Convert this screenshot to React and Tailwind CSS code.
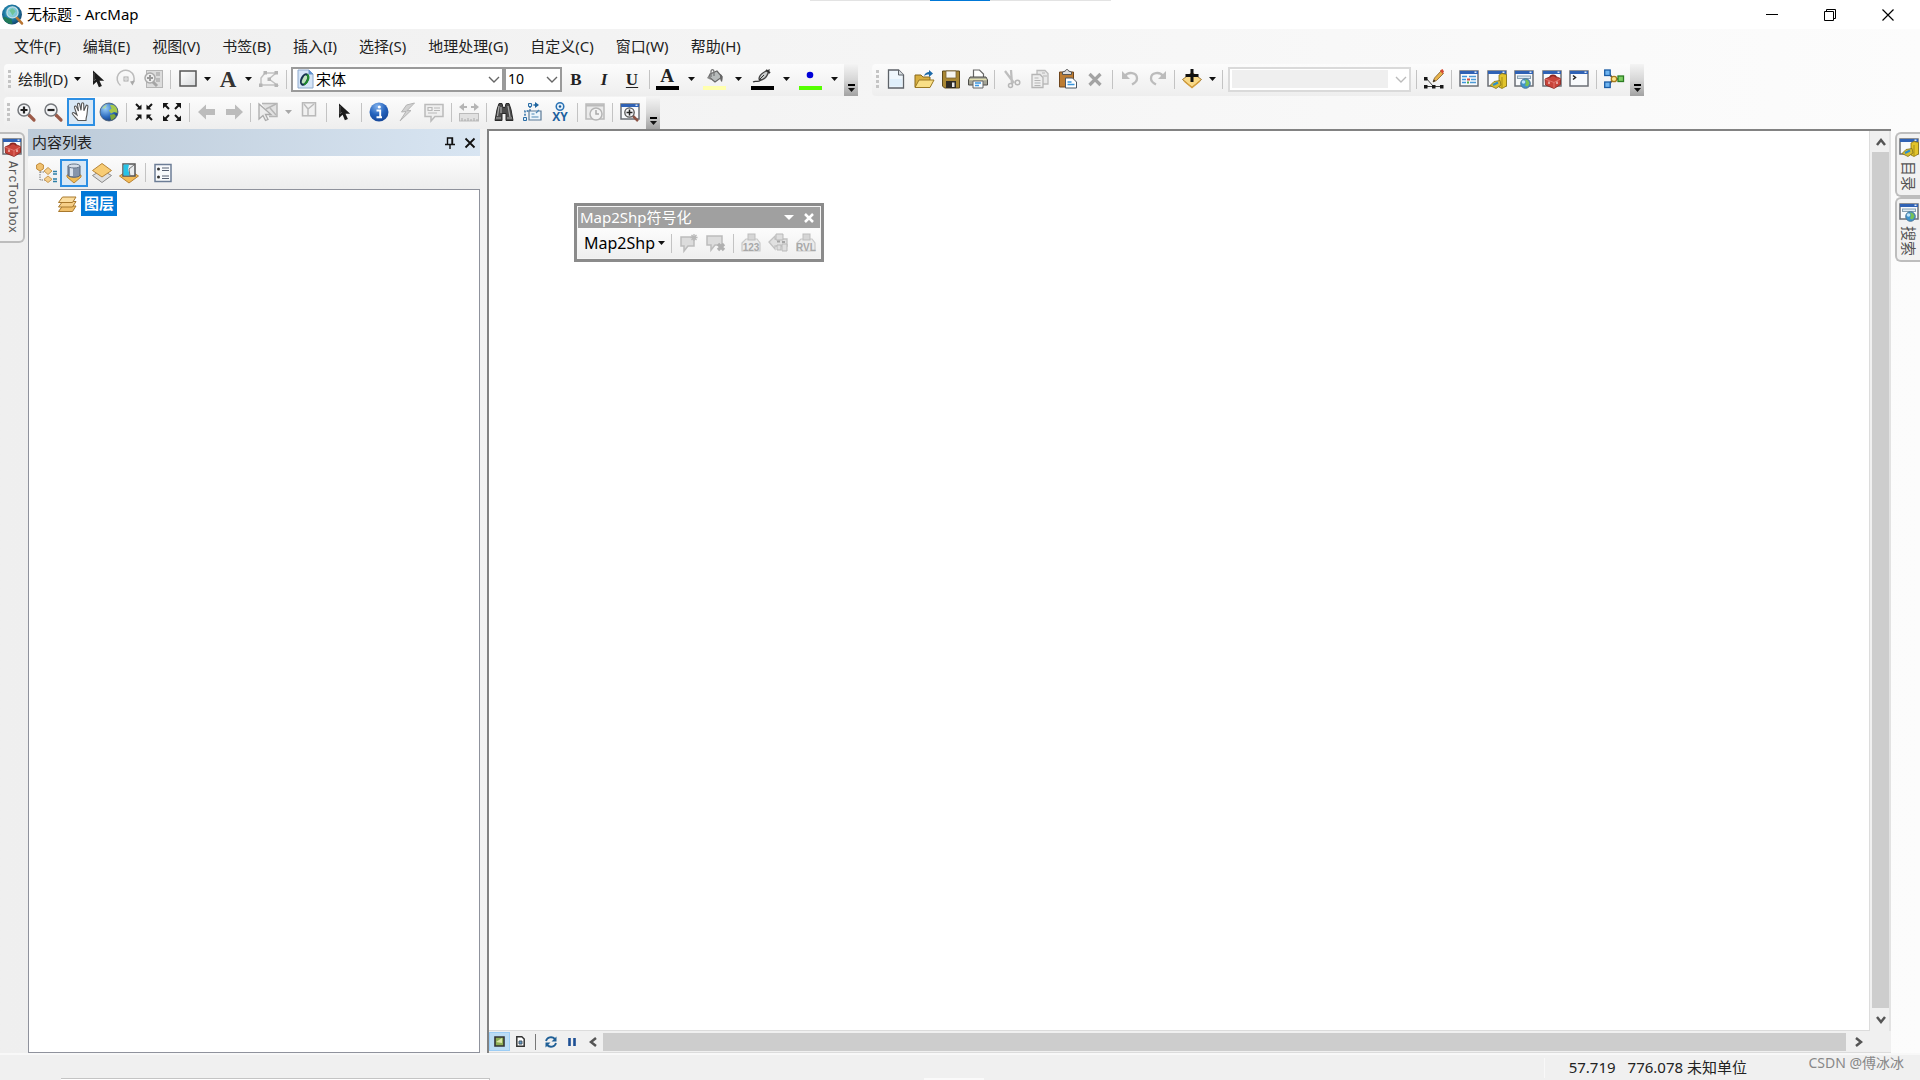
import React from "react";

const UI = "font-['Noto_Sans','Noto_Sans_CJK_SC',sans-serif]";

function Svg({ children, className = "size-5", box = "0 0 20 20" }) {
  return (
    <svg viewBox={box} className={`${className} shrink-0 overflow-visible`} fill="none" aria-hidden="true">
      {children}
    </svg>
  );
}

/* ---------- drawing primitives shared by several icons ---------- */
const WindowFrame = ({ bar = "#2f62b5", stroke = "#6b6f76" }) => (
  <>
    <rect x="1" y="2" width="18" height="15" fill="#f8fafc" stroke={stroke} strokeWidth="1.5" />
    <rect x="1" y="2" width="18" height="3" fill={bar} />
    <rect x="15.500" y="2.500" width="2" height="1.500" fill="#dbe7f7" />
  </>
);

const Lens = ({ cx = 8, cy = 8, r = 6, handle = "#9c5a48" }) => (
  <>
    <path d={`M${cx + 5} ${cy + 5}L18 18`} stroke={handle} strokeWidth="3.200" strokeLinecap="round" />
    <circle cx={cx} cy={cy} r={r} fill="#f3f4f6" stroke="#75787c" strokeWidth="1.500" />
  </>
);

/* ---------- icons ---------- */
const Pointer = () => (
  <Svg>
    <path d="M5 1.500V16l3.600-3.200 2.300 5.400 3-1.300-2.400-5.200h4.700z" fill="#1c1c1c" />
    <path d="M6 4v8l2-2" stroke="#666" strokeWidth=".8" />
  </Svg>
);
const Rotate = () => (
  <Svg>
    <path d="M4.500 16.500A8.500 8.500 0 1 1 17.500 13" stroke="#bcbcbc" strokeWidth="1.500" />
    <path d="M14 12.500l5-1-2.500 5z" fill="#a9a9a9" />
    <rect x="8" y="8" width="4" height="4" stroke="#aaa" />
    <rect x="9.500" y="9.500" width="1" height="1" fill="#888" />
  </Svg>
);
const ZoomElements = () => (
  <Svg>
    <rect x="3.500" y="1.500" width="16" height="17" fill="#dcdcdc" stroke="#b5b5b5" />
    <circle cx="7" cy="9" r="5" fill="#eee" stroke="#aaa" strokeWidth="1.500" />
    <path d="M4 9h6M7 6v6" stroke="#999" strokeWidth="2" />
    <path d="M10 13l4 4" stroke="#a5a5a5" strokeWidth="3" />
    <path d="M13 3h4v4h-4zM13 9h4v4h-4z" fill="#bababa" />
  </Svg>
);
const RectShape = () => (
  <Svg>
    <defs>
      <linearGradient id="rectFill" x1="0" y1="0" x2="1" y2="1">
        <stop offset="0" stopColor="#fff" />
        <stop offset="1" stopColor="#d7d9db" />
      </linearGradient>
    </defs>
    <rect x="2" y="2" width="16" height="15" fill="url(#rectFill)" stroke="#555" strokeWidth="1.500" />
  </Svg>
);
const Vertices = () => (
  <Svg>
    <path d="M2 16V9l4-5h11L10 10l8 6H2" stroke="#c2c2c2" strokeWidth="1.500" />
    <path d="M4.500 2h3.500v3.500H4.500zM15.500 2H19v3.500h-3.500zM8.500 8.500H12V12H8.500zM15.500 14.500H19V18h-3.500zM0 14.500h3.500V18H0z" fill="#b5b5b5" />
  </Svg>
);
const FontFile = () => (
  <Svg>
    <path d="M3 1h11l4 4v14H3z" fill="#d5e5f8" stroke="#8ea9cc" />
    <path d="M14 1v4h4" fill="#5b91d6" stroke="#6d96c8" />
    <ellipse cx="9.500" cy="10.500" rx="3" ry="5.500" transform="rotate(25 9.500 10.500)" stroke="#17324f" strokeWidth="2" fill="#bfe3bf" />
    <path d="M12 5.500c3 2 1 8-3 10" stroke="#1e8c2c" strokeWidth="2" />
  </Svg>
);
const Bucket = () => (
  <>
    <path d="M5 5l7-3 5 6-7 5-6-5z" fill="#b8bcbc" stroke="#666" strokeWidth="1.200" />
    <path d="M6 8V2.500C6 0 9 0 9 3v4" stroke="#777" strokeWidth="1.300" />
    <path d="M15 5c3 1 3 4 2 8-2-1-2-4-2-8z" fill="#666" />
    <path d="M4 6l-2 3 4 2" fill="#888" />
  </>
);
const Pen = () => (
  <>
    <path d="M7 10c0-4 4-7 10-9-1 5-3 9-8 10z" fill="#c9cccc" stroke="#444" strokeWidth="1.300" />
    <path d="M7 11l5-5" stroke="#333" />
    <path d="M14 1l4 3" stroke="#333" strokeWidth="2" />
    <path d="M1 13c3-2 4 1 8-2" stroke="#333" strokeWidth="1.200" />
  </>
);
const NewDoc = () => (
  <Svg>
    <path d="M2.500 1h10l5 5v13h-15z" fill="#f0f7fd" stroke="#5d6268" strokeWidth="1.300" />
    <path d="M12.500 1v5h5" fill="#d8dde2" stroke="#5d6268" />
    <path d="M4 10h12v7.500H4z" fill="#e0effb" />
  </Svg>
);
const OpenFolder = () => (
  <Svg>
    <path d="M1 18V6h6l2 2h7v10z" fill="#d7ae3f" stroke="#89691b" />
    <path d="M1 18.500L5 11h15l-4 7.500z" fill="#f9df86" stroke="#9b7922" />
    <path d="M10 7c1-3 3-4 5-4V1l4 3.500L15 8V5.500c-2 0-3 0-5 1.500z" fill="#1c69a8" />
  </Svg>
);
const Save = () => (
  <Svg>
    <path d="M1.500 2h17v17h-15l-2-2z" fill="#a98732" stroke="#5c4a1d" />
    <path d="M5 2h10v7H5z" fill="#f6f6f0" stroke="#786331" strokeWidth=".8" />
    <path d="M5 12h10v7H5z" fill="#2e2b25" />
    <path d="M11 13.500h2.500V18H11z" fill="#e8e8e8" />
  </Svg>
);
const Print = () => (
  <Svg>
    <path d="M5.500 8V1h6l4 4v3" fill="#fff" stroke="#666" strokeWidth="1.200" />
    <path d="M2 8h16l1.500 3v5H.5v-5z" fill="#a5a597" stroke="#4d4d48" />
    <path d="M1.500 10.500h17" stroke="#e2dfae" strokeWidth="1.500" />
    <path d="M5 12h10v7H5z" fill="#f5fbff" stroke="#666" />
    <path d="M7 14h6M7 16.500h4" stroke="#3c96df" strokeWidth="1.300" />
  </Svg>
);
const Cut = () => (
  <Svg>
    <path d="M3 2l9 12M9 1l1 14" stroke="#bebebe" strokeWidth="2.300" />
    <circle cx="8.500" cy="16.500" r="2" stroke="#b7b7b7" strokeWidth="1.500" />
    <circle cx="15.500" cy="13.500" r="2.300" stroke="#b7b7b7" strokeWidth="1.500" />
  </Svg>
);
const Copy = () => (
  <Svg>
    <path d="M7 1.500h8l3 3V15H7z" fill="#e9e9e9" stroke="#bbb" strokeWidth="1.300" />
    <path d="M2 5.500h8l3 3v10H2z" fill="#eee" stroke="#b5b5b5" strokeWidth="1.300" />
    <path d="M4.500 9h4M4.500 11.500h6M4.500 14h6M4.500 16.500h6M12 4h3M13 7h4" stroke="#b5b5b5" />
  </Svg>
);
const Paste = () => (
  <Svg>
    <path d="M1.500 3h14v15h-14z" fill="#bc7c32" stroke="#6e451c" />
    <path d="M4.500 5.500V3l3-1c0-2 3-2 3 0l3 1v2.500z" fill="#ddd" stroke="#555" />
    <path d="M7.500 9h7l4 4v6h-11z" fill="#fff" stroke="#4b5663" />
    <path d="M9.500 13h4M9.500 15.500h7" stroke="#3794dc" strokeWidth="1.300" />
  </Svg>
);
const Cross = () => (
  <Svg>
    <path d="M4.500 5l11 11M15.500 5l-11 11" stroke="#a3a3a3" strokeWidth="3.200" />
  </Svg>
);
const Undo = () => (
  <Svg>
    <path d="M2 2v8h8z" fill="#bcbcbc" />
    <path d="M5 7C8 2.500 17 3 17 9.500c0 3-2 4.500-5 6" stroke="#bcbcbc" strokeWidth="2.300" />
  </Svg>
);
const Redo = () => (
  <Svg>
    <path d="M18 2v8h-8z" fill="#bcbcbc" />
    <path d="M15 7C12 2.500 3 3 3 9.500c0 3 2 4.500 5 6" stroke="#bcbcbc" strokeWidth="2.300" />
  </Svg>
);
const AddData = () => (
  <Svg>
    <path d="M10 3.500l9.500 7-9.500 8-9.500-8z" fill="#f9d987" stroke="#a27a35" />
    <path d="M2 12l8 6.500 8-6.500" stroke="#d49e3c" strokeWidth="1.500" />
    <path d="M10 0v13M3.500 6.500h13" stroke="#111" strokeWidth="3" />
  </Svg>
);
const EditorIcon = () => (
  <Svg>
    <path d="M2 9l7 8M1.500 17.500h17" stroke="#444" strokeWidth="1" />
    <path d="M0 8h3.500v3.500H0zM0 16h3.500v3.500H0zM8 16h3.500v3.500H8zM16 16h3.500v3.500H16z" fill="#181818" />
    <path d="M9 13l1.500-4L17 2l2.500 2.500-7 7z" fill="#e8b34a" stroke="#7d5b2c" strokeWidth=".8" />
    <path d="M16 1.500L18.500 0 20 2.500 18.500 5z" fill="#d44a32" />
    <path d="M9 13l.8-2.500L11.500 12z" fill="#222" />
  </Svg>
);
const TableWin = () => (
  <Svg>
    <WindowFrame />
    <path d="M3 7.500h5M3 10.500h4M3 13.500h4" stroke="#3c96df" strokeWidth="1.500" />
    <path d="M10 7.500h7M12 10.500h5M11 13.500h6" stroke="#4c9ad6" strokeWidth="1.500" />
    <path d="M8 9.500h3v2H8z" fill="#d34a3c" />
    <path d="M8 12.500h2v2H8z" fill="#4ba848" />
  </Svg>
);
const CatalogWin = () => (
  <Svg>
    <WindowFrame />
    <path d="M12 6l3-1.500 4.500 1V17L15 19.500 12 18z" fill="#e2c42c" stroke="#8a7410" strokeWidth=".8" />
    <path d="M15 8v11" stroke="#a78f14" />
    <path d="M3 16.500l4-4 6-1 1 4.500-5 3.500z" fill="#d8bc2e" stroke="#81701c" strokeWidth=".8" />
    <path d="M6 16l5-2.500" stroke="#2a8fd0" strokeWidth="2" />
  </Svg>
);
const SearchWin = () => (
  <Svg>
    <WindowFrame />
    <rect x="3.500" y="7" width="13" height="2.500" fill="#dbe9f2" stroke="#8aa1b1" />
    <circle cx="11.500" cy="14.500" r="4.800" fill="#3f93cc" stroke="#4b7699" />
    <path d="M11 10.500c3-.5 4 2 4.500 4l-2 3-2.500-1 1-3z" fill="#77c255" />
    <circle cx="9.500" cy="13" r="1.800" fill="#bfe4f8" />
  </Svg>
);
const ToolboxWin = () => (
  <Svg>
    <WindowFrame />
    <path d="M3 10l8-3.500 7.500 3v6L12 19.500 3.500 16z" fill="#c8443a" stroke="#86201a" strokeWidth=".8" />
    <path d="M3 10l9 3.500L18.500 10M12 13.500v6" stroke="#e98078" strokeWidth=".8" />
    <path d="M8 8.500c0-3 6-3 6 0" stroke="#8b2620" strokeWidth="1.300" />
    <path d="M7 12.500v2.500M15 12.500v2.500" stroke="#f4d5cf" strokeWidth="1.300" />
  </Svg>
);
const PythonWin = () => (
  <Svg>
    <WindowFrame />
    <path d="M4 6.500l2.500 2L4 10.500" stroke="#222" strokeWidth="1.500" />
  </Svg>
);
const Model = () => (
  <Svg>
    <path d="M3 4h2l4 6-4 6H3M9 10h9" stroke="#444" strokeWidth="1.500" />
    <rect x=".7" y="1" width="5.500" height="5.500" fill="#6fb4f0" stroke="#1a5ca5" strokeWidth="1.300" />
    <rect x=".7" y="13" width="5.500" height="5.500" fill="#6fb4f0" stroke="#1a5ca5" strokeWidth="1.300" />
    <circle cx="10" cy="10" r="2.700" fill="#ffe58a" stroke="#a67a1c" strokeWidth="1.300" />
    <rect x="14" y="7" width="5.500" height="5.500" fill="#7cce62" stroke="#2c7c22" strokeWidth="1.300" />
  </Svg>
);
const ZoomIn = () => (
  <Svg>
    <Lens />
    <path d="M4.500 8h7M8 4.500v7" stroke="#222" strokeWidth="2.200" />
  </Svg>
);
const ZoomOut = () => (
  <Svg>
    <Lens />
    <path d="M4.500 8h7" stroke="#222" strokeWidth="2.200" />
  </Svg>
);
const Hand = () => (
  <Svg>
    <path
      d="M7 18.500c-1-2-3-3-5.500-6.500-.8-1.300 1-2 2-1l2.500 2L3.500 5.500c-.4-1.500 1.500-2 2-.6L7.500 9 6.500 2.700c-.2-1.600 1.800-1.900 2.200-.4l1.300 6 .6-6.500c.1-1.400 2-1.400 2.100 0l.2 7 2-4.800c.5-1.400 2.300-.8 2 .6-.8 3.400-.4 7.400-1.500 10.400-.4 1.500-.4 2.500-.4 3.500z"
      fill="#fff"
      stroke="#555"
      strokeWidth="1.100"
    />
  </Svg>
);
const Globe = () => (
  <Svg>
    <defs>
      <radialGradient id="globeSea" cx=".3" cy=".3" r=".8">
        <stop offset="0" stopColor="#9bd0fa" />
        <stop offset=".6" stopColor="#2c6cc0" />
        <stop offset="1" stopColor="#16376f" />
      </radialGradient>
    </defs>
    <circle cx="10" cy="10" r="9" fill="url(#globeSea)" stroke="#3f5570" strokeWidth=".8" />
    <path d="M11 3c3-1 6 1 7 4l.5 4-3.500-1-3 1.500-2-3 2.500-2z" fill="#a7c94c" />
    <path d="M11 13l4-1 2 2c-2 3-4 4-5 4z" fill="#7fa83a" />
    <path d="M3 7c1-2 3-4 5-4.500L6.500 6z" fill="#b9dc8c" opacity=".8" />
  </Svg>
);
const FixedIn = () => (
  <Svg>
    <path d="M2 2l4 4M18 2l-4 4M2 18l4-4M18 18l-4-4" stroke="#151515" strokeWidth="2" />
    <path d="M7.500 2.500v5h-5zM12.500 2.500v5h5zM7.500 17.500v-5h-5zM12.500 17.500v-5h5z" fill="#151515" />
  </Svg>
);
const FixedOut = () => (
  <Svg>
    <path d="M3 3l4 4M17 3l-4 4M3 17l4-4M17 17l-4-4" stroke="#151515" strokeWidth="2" />
    <path d="M1 6.500V1h5.500zM19 6.500V1h-5.500zM1 13.500V19h5.500zM19 13.500V19h-5.500z" fill="#151515" />
  </Svg>
);
const Back = () => (
  <Svg>
    <path d="M1 10l8-7.500v4.500h9v6H9v4.500z" fill="#bcbcbc" />
  </Svg>
);
const Forward = () => (
  <Svg>
    <path d="M19 10l-8-7.500v4.500H2v6h9v4.500z" fill="#bcbcbc" />
  </Svg>
);
const SelectFeat = () => (
  <Svg>
    <path d="M4 1.500h15v13h-8" fill="#e2e2e2" stroke="#b5b5b5" strokeWidth="1.500" />
    <path d="M8 7l10-5M12 6l6 7" stroke="#b5b5b5" strokeWidth="1.500" />
    <path d="M1 2v15l4-3.500 2.500 5 2.500-1-2.500-5H13z" fill="#ededed" stroke="#aaa" strokeWidth="1.300" />
  </Svg>
);
const ClearSel = () => (
  <Svg>
    <rect x="3.500" y=".8" width="13" height="13" fill="#f1f1f1" stroke="#b8b8b8" strokeWidth="1.500" />
    <path d="M5 2l4 5v7M9 7l6-5" stroke="#bbb" strokeWidth="1.500" />
  </Svg>
);
const Info = () => (
  <Svg>
    <defs>
      <radialGradient id="infoFill" cx=".4" cy=".2" r=".9">
        <stop offset="0" stopColor="#7fb0ec" />
        <stop offset=".5" stopColor="#2563bd" />
        <stop offset="1" stopColor="#123f8f" />
      </radialGradient>
    </defs>
    <circle cx="10" cy="10" r="9.500" fill="url(#infoFill)" />
    <circle cx="10.300" cy="5" r="1.600" fill="#fff" />
    <path d="M7.500 8.500h3.700V15M7.500 15.300h5.500" stroke="#fff" strokeWidth="1.900" />
  </Svg>
);
const Flash = () => (
  <Svg>
    <path d="M17.500 1l-8 2-5 7 4.500-.500L3 19l11-10.500-4 .2z" fill="#d2d2d2" stroke="#b5b5b5" />
  </Svg>
);
const Popup = () => (
  <Svg>
    <path d="M1 2.500h18v12h-8l-4 4.500v-4.500H1z" fill="#efefef" stroke="#bbb" strokeWidth="1.500" />
    <path d="M4 5.500h4v3H4zM10 6h6M10 8.500h6M4 11h9" stroke="#b9b9b9" strokeWidth="1.200" />
  </Svg>
);
const Measure = () => (
  <Svg>
    <path d="M0 5l5-4v3h3v2H5v3zM20 5l-5-4v3h-3v2h3v3z" fill="#b5b5b5" />
    <rect x=".5" y="11.500" width="19" height="7.500" fill="#e1e1e1" stroke="#bbb" />
    <path d="M3 19v-3M6 19v-2M9 19v-3M12 19v-2M15 19v-3M18 19v-2" stroke="#aaa" />
  </Svg>
);
const Binoculars = () => (
  <Svg>
    <path d="M1 18.500l2-11 2-6h3l1 4h2l1-4h3l2 6 2 11h-7v-7H8v7z" fill="#4a4a4a" stroke="#292929" />
    <path d="M5 4L3.500 14M14 4l2 11M7 5v6" stroke="#aaa" strokeWidth="1.200" />
    <path d="M2 16h5M13 16h5" stroke="#888" strokeWidth="1.500" />
  </Svg>
);
const Route = () => (
  <Svg>
    <path d="M3 17V9h5V3h5" stroke="#2b6da5" strokeWidth="1.500" strokeDasharray="2 1.200" />
    <path d="M13 0l4 3-4 3z" fill="#1f659f" />
    <path d="M1.500 15.500h3v3h-3zM6.500 1.500h3v3h-3z" fill="#d9ecfb" stroke="#2b6da5" />
    <path d="M7 9h12v9H7z" fill="#edf5fb" stroke="#5c7b97" strokeWidth="1.200" />
    <path d="M9.500 12h3M9.500 15h7M14 11l3-3" stroke="#4e87b5" strokeWidth="1.200" />
  </Svg>
);
const GoToXY = () => (
  <Svg>
    <circle cx="10" cy="4.500" r="3.800" fill="#e3f0fa" stroke="#2b73b5" strokeWidth="1.500" />
    <circle cx="10" cy="4.500" r="1.200" fill="#1a5792" />
    <text x="10" y="19" textAnchor="middle" fontSize="12" fontWeight="700" fill="#1e5f9e" className="font-['Open_Sans',sans-serif]">
      XY
    </text>
  </Svg>
);
const Time = () => (
  <Svg>
    <path d="M1 2h18v15H1z" fill="#eaeaea" stroke="#bbb" strokeWidth="1.500" />
    <path d="M1 3.500h18" stroke="#bbb" strokeWidth="2" />
    <circle cx="11" cy="12" r="6" fill="#f3f3f3" stroke="#b5b5b5" strokeWidth="1.500" />
    <path d="M11 8v4h3" stroke="#aaa" strokeWidth="1.500" />
  </Svg>
);
const Viewer = () => (
  <Svg>
    <WindowFrame />
    <path d="M13 14l5 5" stroke="#8c5345" strokeWidth="2.500" />
    <circle cx="9.500" cy="10.500" r="4.700" fill="#f3f4f6" stroke="#555" strokeWidth="1.300" />
    <path d="M6.500 10.500h6M9.500 7.500v6" stroke="#222" strokeWidth="1.500" />
  </Svg>
);
const DrawOrder = () => (
  <Svg>
    <path d="M4 6v11h6M4 9h5" stroke="#777" strokeDasharray="1.500 1" />
    <path d="M4 0l3.500 2-.2 4L4 8 .7 6 .5 2z" fill="#f0c170" stroke="#c48e3e" />
    <path d="M12 4.500l4 3.500-4 3.500L8 8zM12 13l4 3.300-4 3.200-4-3.200z" fill="#f5cf8c" stroke="#c89a55" />
    <path d="M17 8.500h4M17 11h4M17 16h4M17 18.500h4" stroke="#2d7fa6" strokeWidth="1.500" />
  </Svg>
);
const SourceList = () => (
  <Svg>
    <path d="M10 20l-7-6v-2h14v2z" fill="#f1bc56" stroke="#ba8434" />
    <path d="M4 3v9c0 3 12 3 12 0V3z" fill="#8695ab" stroke="#556377" />
    <path d="M6 5v8h3V5z" fill="#dbe3ed" />
    <ellipse cx="10" cy="3" rx="6" ry="2" fill="#d6dee8" stroke="#66758a" />
  </Svg>
);
const VisibleList = () => (
  <Svg>
    <path d="M10 7l9.500 5.500L10 19.500.5 12.500z" fill="#e0e0e0" stroke="#8b8b8b" />
    <path d="M10 .5l9.500 7L10 14 .5 7.500z" fill="#f8cc74" stroke="#b68539" />
  </Svg>
);
const SelectionList = () => (
  <Svg>
    <path d="M10 20L.5 13 5 10h10l4.500 3z" fill="#f3bb56" stroke="#b98334" />
    <rect x="4" y="1" width="12" height="12" fill="#e9ecee" stroke="#555" strokeWidth="1.500" />
    <path d="M4.500 1.500h5.500l-1 5 2 6H4.500z" fill="#27c3e6" />
    <path d="M10 6l5-4M10 6l1 7" stroke="#777" />
  </Svg>
);
const Options = () => (
  <Svg>
    <rect x="2" y="1.500" width="16" height="17" fill="#f8fafc" stroke="#6c7d96" strokeWidth="1.500" />
    <path d="M9 5h7M9 7.500h7M9 13h7M9 15.500h7" stroke="#555f70" strokeWidth="1.200" />
    <circle cx="5.500" cy="6" r="1.500" fill="#333" />
    <circle cx="5.500" cy="14" r="1.500" fill="#333" />
  </Svg>
);
const Layers = () => (
  <Svg>
    <path d="M5.500 12H19l-3.500 5.500H1.500z" fill="#f0c06c" stroke="#a8782c" />
    <path d="M5.500 7.500H19L15.500 13H1.500z" fill="#f6cf88" stroke="#a8782c" />
    <path d="M5.500 3H19l-3.500 5.500H1.500z" fill="#fbdd9f" stroke="#a8782c" />
  </Svg>
);
const BubbleAdd = () => (
  <Svg>
    <path d="M2 4h13v9H9l-4 5v-5H2z" fill="#dcdcdc" stroke="#bcbcbc" strokeWidth="1.500" />
    <path d="M15 1v7M11.500 4.500h7M12.500 2l5 5M17.500 2l-5 5" stroke="#b8b8b8" strokeWidth="1.300" />
  </Svg>
);
const BubbleDel = () => (
  <Svg>
    <path d="M1 3h15v9H9l-4 5v-5H1z" fill="#dcdcdc" stroke="#bcbcbc" strokeWidth="1.500" />
    <path d="M12 11l6 6M18 11l-6 6" stroke="#b0b0b0" strokeWidth="3.200" />
  </Svg>
);
const Export = ({ label }) => (
  <Svg>
    <path d="M1 10l4-4h11l3 4v8H1z" fill="#ececec" stroke="#c9c9c9" strokeWidth="1.200" />
    <rect x="7" y="1" width="7" height="6" fill="#d6d6d6" stroke="#bdbdbd" />
    <text x="10" y="17.500" textAnchor="middle" fontSize="10" fontWeight="700" fill="#a8a8a8" className="font-['Liberation_Sans',sans-serif]">
      {label}
    </text>
  </Svg>
);
const ExportBack = () => (
  <Svg>
    <path d="M0 9l6-6v3h12v7H6v3z" fill="#e0e0e0" stroke="#c2c2c2" strokeWidth="1.300" />
    <path d="M7 1h7v6H7zM8 12h4v5H8zM13 11h5v7h-5z" fill="#dedede" stroke="#b9b9b9" />
    <path d="M8 8.500h3M13 9h3" stroke="#a5a5a5" strokeWidth="2" />
  </Svg>
);
const AppLogo = () => (
  <Svg className="size-[21px]">
    <defs>
      <radialGradient id="logoSea" cx=".45" cy=".4" r=".65">
        <stop offset="0" stopColor="#a5e0e8" />
        <stop offset=".5" stopColor="#1f7fa8" />
        <stop offset="1" stopColor="#123b66" />
      </radialGradient>
    </defs>
    <circle cx="9.500" cy="10" r="9.500" fill="url(#logoSea)" />
    <path d="M1 13c3-2 5 2 8 1l1 5c-4 0-8-2-9-6z" fill="#227a58" />
    <path d="M14 13l5 5.500" stroke="#b87533" strokeWidth="2.500" strokeLinecap="round" />
    <circle cx="10" cy="8" r="5.300" fill="#8fd3de" fillOpacity=".8" stroke="#c8dfe4" strokeWidth="1.200" />
    <path d="M7 6l3-2 3 3-3 4z" fill="#6fc39a" />
  </Svg>
);

/* ---------- toolbar building blocks ---------- */
function ToolButton({ label, narrow, active, disabled, children }) {
  return (
    <button
      type="button"
      aria-label={label}
      aria-pressed={active ? true : undefined}
      disabled={disabled}
      className={`flex h-7 shrink-0 items-center justify-center ${narrow ? "w-[27px]" : "w-7"} ${
        active ? "border-2 border-[#2d8fe3] bg-[#d9e8f5]" : ""
      }`}
    >
      {children}
    </button>
  );
}
const Sep = () => <div className="mx-[3px] h-[19px] w-px shrink-0 bg-[#c3c3c3]" />;
const Grip = ({ width = "w-2.5" }) => (
  <div className={`flex shrink-0 flex-col items-center gap-0.5 ${width}`}>
    <i className="size-[3px] bg-[#c4c4c4]" />
    <i className="size-[3px] bg-[#c4c4c4]" />
    <i className="size-[3px] bg-[#c4c4c4]" />
    <i className="size-[3px] bg-[#c4c4c4]" />
  </div>
);
const CaretGlyph = ({ color = "#111" }) => (
  <Svg className="h-1 w-[7px]" box="0 0 7 4">
    <path d="M0 0h7L3.500 4z" fill={color} />
  </Svg>
);
function Caret({ label, wide, disabled }) {
  return (
    <button type="button" aria-label={label} disabled={disabled} className={`flex h-7 shrink-0 items-center justify-center ${wide ? "w-5" : "w-[13px]"}`}>
      <CaretGlyph color={disabled ? "#a8a8a8" : "#111"} />
    </button>
  );
}
const Overflow = () => (
  <button
    type="button"
    aria-label="工具条选项"
    className="flex h-8 w-3.5 shrink-0 flex-col items-center justify-end gap-0.5 self-start bg-linear-to-b from-[#f4f4f4] via-[#d6d6d6] to-[#a2a2a2] pb-1"
  >
    <i className="h-0.5 w-[7px] bg-black" />
    <CaretGlyph />
  </button>
);
const Bar = ({ children, label }) => (
  <div role="toolbar" aria-label={label} className="flex h-8 shrink-0 items-center rounded-l bg-linear-to-b from-[#fcfcfc] to-[#eeeeee] pb-0.5">
    {children}
  </div>
);
const ColorTool = ({ bar, children }) => (
  <span className="flex flex-col items-center gap-[3px]">
    <Svg className="h-3.5 w-5" box="0 0 20 14">
      {children}
    </Svg>
    <i className={`h-1 w-[23px] ${bar}`} />
  </span>
);
const Chevron = ({ color = "#666" }) => (
  <Svg className="pointer-events-none absolute right-0.5 h-[7px] w-3" box="0 0 12 7">
    <path d="M1 1l5 5 5-5" stroke={color} strokeWidth="1.400" />
  </Svg>
);

function DrawBar() {
  return (
    <Bar label="绘制">
      <Grip />
      <button type="button" className="flex h-7 w-[70px] shrink-0 items-center gap-1.5 pl-1 text-[15px] text-[#222]">
        绘制(D)
        <CaretGlyph />
      </button>
      <ToolButton label="选择元素"><Pointer /></ToolButton>
      <ToolButton label="旋转" narrow disabled><Rotate /></ToolButton>
      <ToolButton label="缩放至所选元素" disabled><ZoomElements /></ToolButton>
      <Sep />
      <ToolButton label="矩形" narrow><RectShape /></ToolButton>
      <Caret label="形状类型" />
      <ToolButton label="文本">
        <span className="font-['Liberation_Serif',serif] text-[23px] leading-none font-bold text-[#333]">A</span>
      </ToolButton>
      <Caret label="文本类型" />
      <ToolButton label="编辑折点" disabled><Vertices /></ToolButton>
      <Sep />
      <label className="relative ml-px flex h-[25px] w-[213px] shrink-0 items-center border-2 border-[#9a9a9a] bg-white">
        <span className="pointer-events-none absolute left-0.5"><FontFile /></span>
        <select aria-label="字体" defaultValue="宋体" className="h-full w-full appearance-none bg-transparent pl-[23px] text-[15px] leading-5 text-black outline-none">
          <option>宋体</option>
        </select>
        <Chevron />
      </label>
      <label className="relative flex h-[25px] w-[58px] shrink-0 items-center border-2 border-[#9a9a9a] bg-white">
        <select aria-label="字号" defaultValue="10" className="h-full w-full appearance-none bg-transparent pl-0.5 text-[14px] leading-5 text-black outline-none">
          <option>10</option>
        </select>
        <Chevron />
      </label>
      <ToolButton label="粗体"><b className="font-['Liberation_Serif',serif] text-[17px] leading-none text-[#222]">B</b></ToolButton>
      <ToolButton label="斜体"><b className="font-['Liberation_Serif',serif] text-[17px] leading-none text-[#222] italic">I</b></ToolButton>
      <ToolButton label="下划线"><b className="font-['Liberation_Serif',serif] text-[17px] leading-none text-[#222] underline underline-offset-2">U</b></ToolButton>
      <Sep />
      <ToolButton label="字体颜色">
        <ColorTool bar="bg-black">
          <text x="10" y="13" textAnchor="middle" fontSize="19" fontWeight="700" fill="#222" className="font-['Liberation_Serif',serif]">A</text>
        </ColorTool>
      </ToolButton>
      <Caret label="选择字体颜色" wide />
      <ToolButton label="填充颜色" narrow><ColorTool bar="bg-[#ffffae]"><Bucket /></ColorTool></ToolButton>
      <Caret label="选择填充颜色" wide />
      <ToolButton label="线颜色"><ColorTool bar="bg-black"><Pen /></ColorTool></ToolButton>
      <Caret label="选择线颜色" wide />
      <ToolButton label="标记颜色"><ColorTool bar="bg-[#55ff00]"><circle cx="10" cy="6" r="3.300" fill="#0000d8" /></ColorTool></ToolButton>
      <Caret label="选择标记颜色" wide />
      <Overflow />
    </Bar>
  );
}

function StandardBar() {
  return (
    <Bar label="标准工具">
      <Grip />
      <ToolButton label="新建"><NewDoc /></ToolButton>
      <ToolButton label="打开" narrow><OpenFolder /></ToolButton>
      <ToolButton label="保存" narrow><Save /></ToolButton>
      <ToolButton label="打印" narrow><Print /></ToolButton>
      <Sep />
      <ToolButton label="剪切" disabled><Cut /></ToolButton>
      <ToolButton label="复制" disabled><Copy /></ToolButton>
      <ToolButton label="粘贴" narrow><Paste /></ToolButton>
      <ToolButton label="删除" disabled><Cross /></ToolButton>
      <Sep />
      <ToolButton label="撤消" disabled><Undo /></ToolButton>
      <ToolButton label="恢复" narrow disabled><Redo /></ToolButton>
      <Sep />
      <ToolButton label="添加数据"><AddData /></ToolButton>
      <Caret label="添加数据选项" />
      <Sep />
      <label className="relative mx-0.5 flex h-[25px] w-[183px] shrink-0 items-center border-2 border-[#dadada] bg-white">
        <select aria-label="地图比例" disabled className="ml-0.5 h-[18px] w-[156px] appearance-none bg-[#efefef]" />
        <Chevron color="#bbb" />
      </label>
      <Sep />
      <ToolButton label="编辑器工具条"><EditorIcon /></ToolButton>
      <Sep />
      <ToolButton label="内容列表窗口"><TableWin /></ToolButton>
      <ToolButton label="目录窗口" narrow><CatalogWin /></ToolButton>
      <ToolButton label="搜索窗口"><SearchWin /></ToolButton>
      <ToolButton label="ArcToolbox 窗口" narrow><ToolboxWin /></ToolButton>
      <ToolButton label="Python 窗口"><PythonWin /></ToolButton>
      <Sep />
      <ToolButton label="模型构建器窗口"><Model /></ToolButton>
      <div className="w-0.5" />
      <Overflow />
    </Bar>
  );
}

function ToolsBar() {
  return (
    <Bar label="工具">
      <Grip width="w-2" />
      <ToolButton label="放大" narrow><ZoomIn /></ToolButton>
      <ToolButton label="缩小"><ZoomOut /></ToolButton>
      <ToolButton label="平移" active><Hand /></ToolButton>
      <ToolButton label="全图"><Globe /></ToolButton>
      <Sep />
      <ToolButton label="固定比例放大"><FixedIn /></ToolButton>
      <ToolButton label="固定比例缩小"><FixedOut /></ToolButton>
      <Sep />
      <ToolButton label="返回" narrow disabled><Back /></ToolButton>
      <ToolButton label="前进" narrow disabled><Forward /></ToolButton>
      <Sep />
      <ToolButton label="选择要素" disabled><SelectFeat /></ToolButton>
      <Caret label="选择要素方式" disabled />
      <ToolButton label="清除所选要素" disabled><ClearSel /></ToolButton>
      <Sep />
      <ToolButton label="选择元素"><Pointer /></ToolButton>
      <Sep />
      <ToolButton label="识别"><Info /></ToolButton>
      <ToolButton label="超链接" narrow disabled><Flash /></ToolButton>
      <ToolButton label="HTML 弹出窗口" disabled><Popup /></ToolButton>
      <Sep />
      <ToolButton label="测量" disabled><Measure /></ToolButton>
      <Sep />
      <ToolButton label="查找"><Binoculars /></ToolButton>
      <ToolButton label="查找路径"><Route /></ToolButton>
      <ToolButton label="转到 XY"><GoToXY /></ToolButton>
      <Sep />
      <ToolButton label="时间滑块" disabled><Time /></ToolButton>
      <Sep />
      <ToolButton label="创建查看器窗口"><Viewer /></ToolButton>
      <div className="w-0.5" />
      <Overflow />
    </Bar>
  );
}

const MENUS = ["文件(F)", "编辑(E)", "视图(V)", "书签(B)", "插入(I)", "选择(S)", "地理处理(G)", "自定义(C)", "窗口(W)", "帮助(H)"];

function TitleBar() {
  return (
    <header className="relative flex h-[29px] shrink-0 items-center bg-white pl-0.5">
      <AppLogo />
      <h1 className="ml-1 flex-1 text-[15px] leading-none text-black">无标题 - ArcMap</h1>
      <button type="button" aria-label="最小化" className="flex h-full w-[58px] items-center justify-center">
        <Svg className="size-3" box="0 0 12 12"><path d="M0 5.500h12" stroke="#000" /></Svg>
      </button>
      <button type="button" aria-label="向下还原" className="flex h-full w-[58px] items-center justify-center">
        <Svg className="size-3" box="0 0 12 12"><path d="M.5 2.500h9v9h-9zM2.500 2.500v-2h9v9h-2" stroke="#000" /></Svg>
      </button>
      <button type="button" aria-label="关闭" className="mr-[3px] flex h-full w-[58px] items-center justify-center">
        <Svg className="size-3" box="0 0 12 12"><path d="M.5.5l11 11M11.500.5l-11 11" stroke="#000" strokeWidth="1.200" /></Svg>
      </button>
      <div className="absolute inset-x-0 top-0 flex justify-center">
        <div className="flex h-px w-[301px] justify-center bg-[#e3e3e3]">
          <div className="w-[60px] bg-[#0078d7]" />
        </div>
      </div>
    </header>
  );
}

function SideTab({ side, icon, children, height }) {
  return (
    <button
      type="button"
      className={`flex w-full flex-col items-center gap-1 border-2 border-[#bdbdbd] bg-[#f2f2f2] pt-[3px] text-[#555] ${height} ${
        side === "left" ? "rounded-r-md border-l-0" : "rounded-l-md border-r-0"
      }`}
    >
      {icon}
      {children}
    </button>
  );
}

function ContentsPanel() {
  return (
    <section className="flex w-[452px] shrink-0 flex-col">
      <div className="flex h-[27px] shrink-0 items-center bg-linear-to-r from-[#bccad8] to-[#d8e5f2] pl-1">
        <h2 className="flex-1 text-[15px] leading-none text-[#222]">内容列表</h2>
        <button type="button" aria-label="自动隐藏" className="flex size-5 items-center justify-center">
          <Svg className="h-3 w-2.5" box="0 0 10 12"><path d="M2.500 7V1h5v6M0 7.500h10M5 8v4M7 1v6" stroke="#111" strokeWidth="1.400" /></Svg>
        </button>
        <button type="button" aria-label="关闭内容列表" className="flex size-5 items-center justify-center">
          <Svg className="size-2.5" box="0 0 10 10"><path d="M.5.5l9 9M9.500.5l-9 9" stroke="#111" strokeWidth="1.800" /></Svg>
        </button>
      </div>
      <div role="toolbar" aria-label="内容列表" className="flex h-[33px] shrink-0 items-center rounded-l bg-linear-to-b from-[#fcfcfc] to-[#ededed] pl-1">
        <ToolButton label="按绘制顺序列出"><DrawOrder /></ToolButton>
        <ToolButton label="按源列出" active><SourceList /></ToolButton>
        <ToolButton label="按可见性列出" narrow><VisibleList /></ToolButton>
        <ToolButton label="按选择列出" narrow><SelectionList /></ToolButton>
        <Sep />
        <ToolButton label="选项"><Options /></ToolButton>
      </div>
      <div className="flex-1 border border-[#8f929c] bg-white">
        <div className="flex items-center gap-1 pt-px pl-7">
          <Layers />
          <span className="bg-[#0078d7] px-[3px] text-[15px] leading-[25px] font-bold text-white">图层</span>
        </div>
      </div>
    </section>
  );
}

function SymbolWindow() {
  return (
    <section className="absolute top-[72px] left-[85px] w-[250px] border-[3px] border-[#8b8b8b] bg-[#f4f4f4] p-px">
      <div className="flex h-[21px] items-center bg-[#a0a0a0] pl-0.5">
        <h2 className="flex-1 text-[15px] leading-none text-white">Map2Shp符号化</h2>
        <button type="button" aria-label="工具条选项" className="flex size-5 items-center justify-center">
          <Svg className="h-[5px] w-2.5" box="0 0 10 5"><path d="M0 0h10L5 5z" fill="#fff" /></Svg>
        </button>
        <button type="button" aria-label="关闭工具条" className="mr-px flex size-5 items-center justify-center">
          <Svg className="size-2.5" box="0 0 10 10"><path d="M1 1l8 8M9 1l-8 8" stroke="#fff" strokeWidth="2.500" /></Svg>
        </button>
      </div>
      <div className="flex h-[30px] items-center bg-linear-to-b from-[#fcfcfc] to-[#efefef]">
        <button type="button" className="flex w-[90px] shrink-0 items-center gap-[3px] pl-1.5 text-[16px] text-black">
          Map2Shp
          <CaretGlyph />
        </button>
        <Sep />
        <ToolButton label="添加注记" narrow disabled><BubbleAdd /></ToolButton>
        <ToolButton label="删除注记" disabled><BubbleDel /></ToolButton>
        <Sep />
        <ToolButton label="导出编号" disabled><Export label="123" /></ToolButton>
        <ToolButton label="导入符号" narrow disabled><ExportBack /></ToolButton>
        <ToolButton label="导出 RVL" narrow disabled><Export label="RVL" /></ToolButton>
      </div>
    </section>
  );
}

const Arrow = ({ d }) => (
  <Svg className="size-2.5" box="0 0 10 10">
    <path d={d} stroke="#555" strokeWidth="2.500" />
  </Svg>
);

function MapView() {
  return (
    <main className="flex min-w-0 flex-1 flex-col border-t-2 border-l-2 border-[#828282] bg-[#f0f0f0]">
      <div className="flex min-h-0 flex-1">
        <div className="relative min-w-0 flex-1 border-r border-b border-[#dcdcdc] bg-white">
          <SymbolWindow />
        </div>
        <div className="flex w-[21px] shrink-0 flex-col border-r-2 border-[#e3e3e3] pl-0.5">
          <button type="button" aria-label="向上滚动" className="flex h-[21px] items-center justify-center"><Arrow d="M1 8l4-5 4 5" /></button>
          <div className="flex-1 bg-[#cdcdcd]" />
          <button type="button" aria-label="向下滚动" className="flex h-[23px] items-center justify-center"><Arrow d="M1 2l4 5 4-5" /></button>
        </div>
      </div>
      <div className="flex h-[22px] shrink-0 items-center border-b border-[#dcdcdc]">
        <button type="button" aria-label="数据视图" className="flex h-[19px] w-[21px] items-center justify-center border border-[#9ccdf5] bg-[#bcdcf4]">
          <Svg className="size-[11px]" box="0 0 11 11"><path d="M1 1h9v9H1z" fill="#8fae55" stroke="#333" strokeWidth="1.600" /><path d="M2 6l6-4v5z" fill="#dce7a8" /></Svg>
        </button>
        <button type="button" aria-label="布局视图" className="flex h-[19px] w-[21px] items-center justify-center">
          <Svg className="h-[11px] w-[9px]" box="0 0 9 11"><path d="M.8.8h5L8.200 3v7.200H.8z" fill="#fff" stroke="#333" strokeWidth="1.500" /><path d="M3 5h3v3H3z" fill="#5b9bc8" stroke="#456" /></Svg>
        </button>
        <div className="mr-1 ml-1 h-4 w-px bg-[#777]" />
        <button type="button" aria-label="刷新视图" className="flex w-[21px] items-center justify-center">
          <Svg className="size-3" box="0 0 12 12"><path d="M1 5c1-4 6-5 9-2M11 7c-1 4-6 5-9 2" stroke="#1f5f96" strokeWidth="1.800" /><path d="M11.500.5v5h-5zM.5 11.500v-5h5z" fill="#1f5f96" /></Svg>
        </button>
        <button type="button" aria-label="暂停绘制" className="flex w-[21px] items-center justify-center">
          <Svg className="size-2" box="0 0 8 8"><path d="M1.500 0v8M6.500 0v8" stroke="#1d4f94" strokeWidth="2.600" /></Svg>
        </button>
        <button type="button" aria-label="向左滚动" className="flex w-[21px] items-center justify-center"><Arrow d="M8 1L3 5l5 4" /></button>
        <div className="h-[18px] flex-1 bg-[#cdcdcd]" />
        <button type="button" aria-label="向右滚动" className="flex w-[25px] items-center justify-center"><Arrow d="M2 1l5 4-5 4" /></button>
        <div className="w-5" />
      </div>
    </main>
  );
}

export default function App() {
  return (
    <div className={`flex h-screen flex-col overflow-hidden bg-linear-to-r from-[#efefef] to-[#fcfcfc] ${UI}`}>
      <TitleBar />
      <nav className="flex h-[35px] shrink-0 items-center gap-0.5 pb-px pl-1">
        {MENUS.map((m) => (
          <button key={m} type="button" className="px-2.5 text-[15px] leading-none text-[#222]">
            {m}
          </button>
        ))}
      </nav>
      <div className="flex h-[33px] shrink-0 items-start gap-3.5 pl-1">
        <DrawBar />
        <StandardBar />
      </div>
      <div className="flex h-8 shrink-0 items-start pl-1">
        <ToolsBar />
      </div>
      <div className="flex min-h-0 flex-1">
        <aside className="w-7 shrink-0 pt-[3px] pr-[3px]">
          <SideTab side="left" icon={<ToolboxWin />} height="h-[111px]">
            <span className="font-['Liberation_Mono',monospace] text-[12px] leading-none [writing-mode:vertical-rl]">ArcToolbox</span>
          </SideTab>
        </aside>
        <ContentsPanel />
        <div className="w-[7px] shrink-0" />
        <MapView />
        <aside className="flex w-[29px] shrink-0 flex-col pt-[3px] pl-1">
          <SideTab side="right" icon={<CatalogWin />} height="h-[65px]">
            <span className="text-[15px] leading-none [text-orientation:sideways] [writing-mode:vertical-rl]">目录</span>
          </SideTab>
          <SideTab side="right" icon={<SearchWin />} height="h-[65px]">
            <span className="text-[15px] leading-none [text-orientation:sideways] [writing-mode:vertical-rl]">搜索</span>
          </SideTab>
        </aside>
      </div>
      <footer className="relative flex h-[27px] shrink-0 items-center justify-end border-t-2 border-[#f8f8f8] bg-[#f0f0f0]">
        <div className="mr-6 h-5 w-px bg-[#f8f8f8]" />
        <p className="mr-[173px] flex gap-3 text-[15px] leading-none text-[#222]">
          <span>57.719</span>
          <span>776.078 未知单位</span>
        </p>
        <span className="absolute top-px right-4 text-[14px] leading-none text-[#888]">CSDN @傅冰冰</span>
        <i className="absolute bottom-0 left-[61px] h-0.5 w-[429px] border-t border-r border-[#c4c4c4] bg-white" />
        <i className="absolute bottom-0 left-[924px] h-0.5 w-[60px] bg-[#fafafa]" />
      </footer>
    </div>
  );
}
